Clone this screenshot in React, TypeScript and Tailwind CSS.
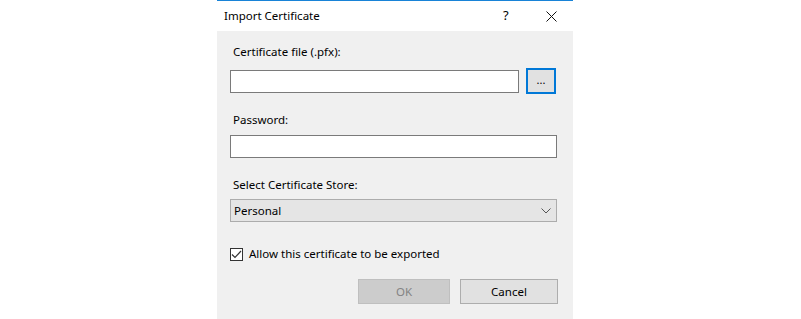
const font = { fontFamily: '"Noto Sans", "Open Sans", sans-serif' }

function TextBox({ className = '' }: { className?: string }) {
  return <div className={`h-[23px] border border-[#7a7a7a] bg-white ${className}`} />
}

export default function App() {
  return (
    <div className="h-[319px] w-[801px] bg-white" style={font}>
      <div className="ml-[217px] flex h-full w-[356px] flex-col border-t border-[#1883d7] text-[11.5px] text-black">
        {/* title bar */}
        <div className="flex h-[30px] items-center bg-white pl-[7px]">
          <span className="flex-1">Import Certificate</span>
          <span className="w-[20px] text-[13px]">?</span>
          <span className="mr-[11px] ml-[17px] flex h-[30px] w-[22px] items-center justify-center">
            <svg width="11" height="11" viewBox="0 0 11 11" fill="none" stroke="#111" strokeWidth="1">
              <path d="M0.5 0.5L10.5 10.5M10.5 0.5L0.5 10.5" />
            </svg>
          </span>
        </div>

        {/* body */}
        <div className="flex flex-1 flex-col bg-[#f0f0f0] pt-[13px] pr-[16px] pl-[13px]">
          <label className="pl-[3px] leading-[16px]">Certificate file (.pfx):</label>
          <div className="mt-[8px] flex items-center">
            <TextBox className="flex-1" />
            <button className="mr-[1px] ml-[7px] flex h-[26px] w-[30px] items-center justify-center border-2 border-[#0078d7] bg-[#e1e1e1] pb-[4px] text-[11px] leading-none">
              ...
            </button>
          </div>

          <label className="mt-[18px] pl-[3px] leading-[16px]">Password:</label>
          <TextBox className="mt-[7px]" />

          <label className="mt-[19px] pl-[3px] leading-[16px]">Select Certificate Store:</label>
          <div className="mt-[6px] flex h-[23px] items-center border border-[#acacac] bg-[#e5e5e5] pr-[5px] pl-[3px]">
            <span className="flex-1">Personal</span>
            <svg width="10" height="6" viewBox="0 0 10 6" fill="none" stroke="#555" strokeWidth="1">
              <path d="M0.5 0.5L5 5L9.5 0.5" />
            </svg>
          </div>

          <div className="mt-[24px] flex items-center leading-[16px]">
            <span className="flex h-[13px] w-[13px] items-center justify-center border border-[#333] bg-white">
              <svg width="11" height="9" viewBox="0 0 11 9" fill="none" stroke="#333" strokeWidth="1.2">
                <path d="M1 4.5L4 7.5L10 1" />
              </svg>
            </span>
            <span className="ml-[6px]">Allow this certificate to be exported</span>
          </div>

          <div className="mt-[17px] flex justify-end gap-[10px]">
            <button className="h-[25px] w-[92px] border border-[#bfbfbf] bg-[#cccccc] text-[#838383]">OK</button>
            <button className="-mr-[1px] h-[25px] w-[98px] border border-[#adadad] bg-[#e1e1e1]">Cancel</button>
          </div>
        </div>
      </div>
    </div>
  )
}
